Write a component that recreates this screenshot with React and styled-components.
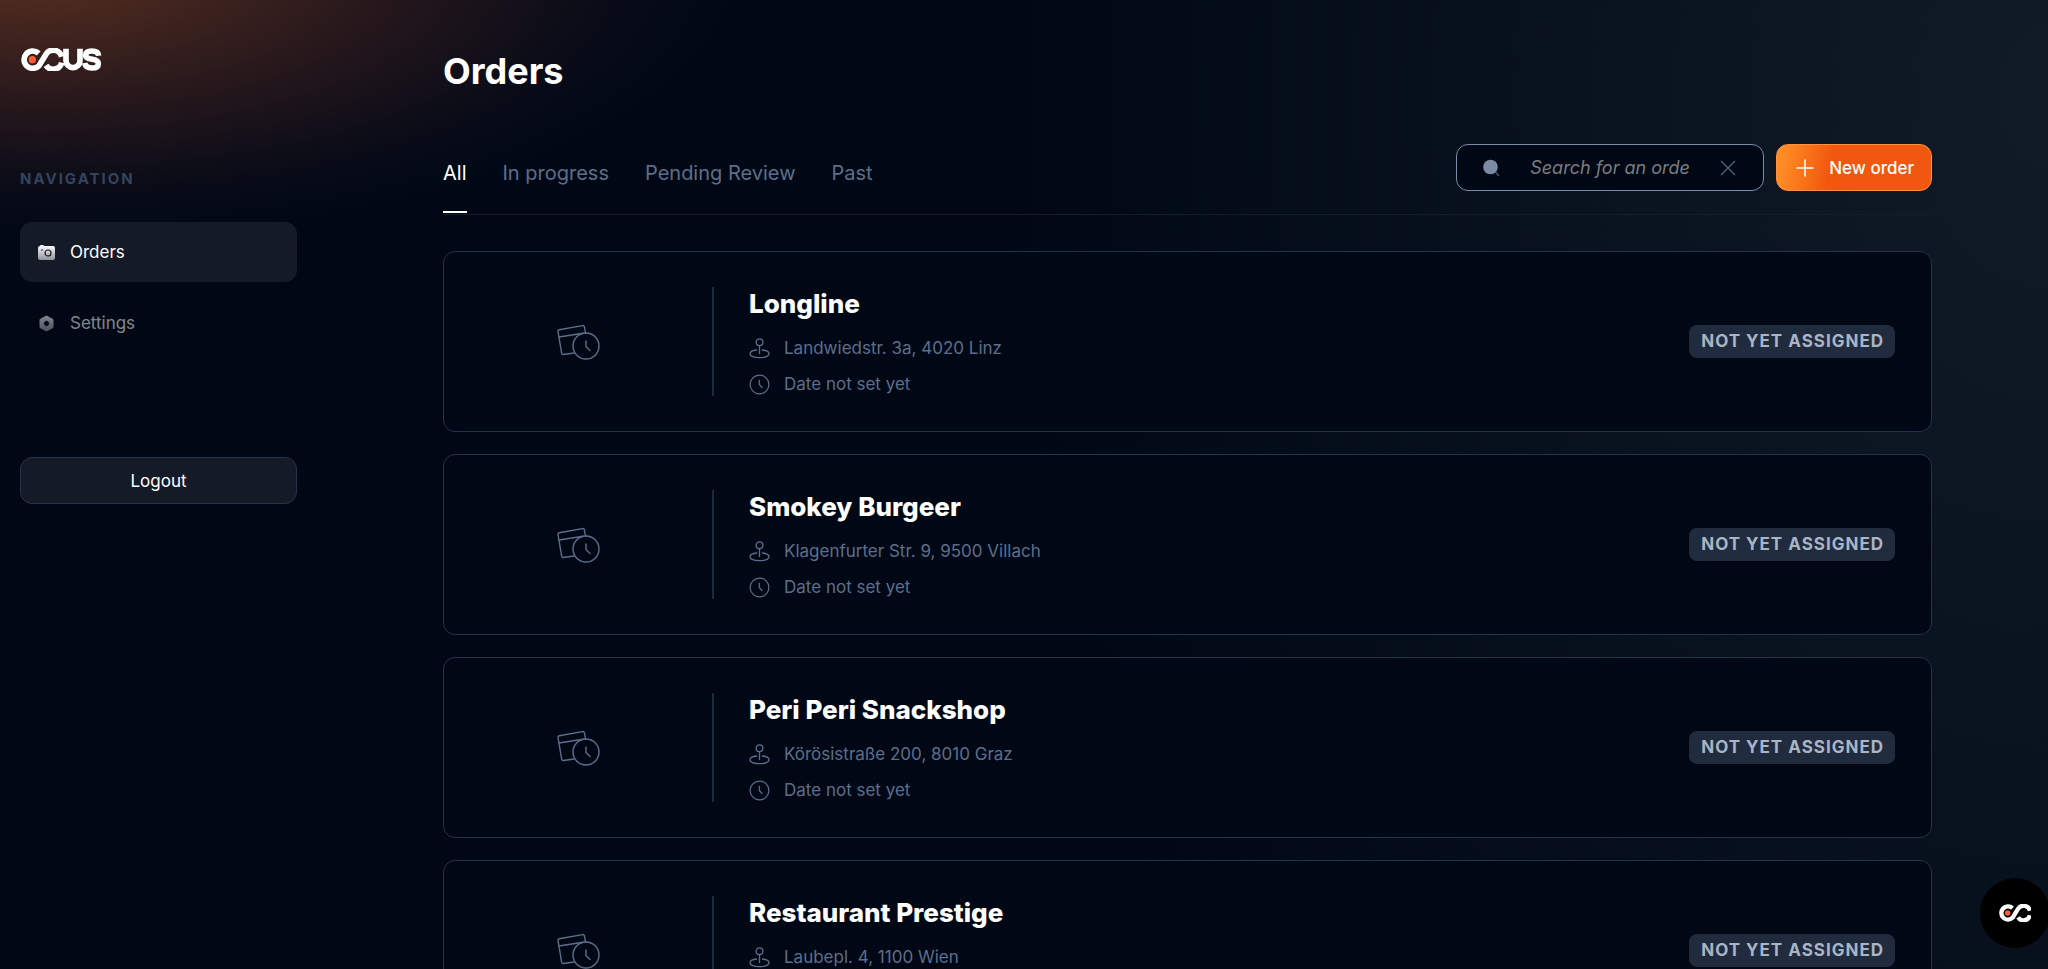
import React from 'react';
import styled, { createGlobalStyle } from 'styled-components';

const theme = {
  font: "Inter, 'Liberation Sans', sans-serif",
  colors: {
    background: '#000816',
    surface: '#141b27',
    border: '#1e293b',
    cardBorder: '#263247',
    muted: '#5e6e8a',
    heading: '#33445f',
    white: '#ffffff',
  },
  radius: '12px',
};

const GlobalStyle = createGlobalStyle`
  * {
    box-sizing: border-box;
  }

  body {
    margin: 0;
    overflow: hidden;
    background: ${theme.colors.background};
    font-family: ${theme.font};
    color: ${theme.colors.white};
  }

  button, input {
    font-family: inherit;
  }
`;

const Page = styled.div`
  display: flex;
  height: 100vh;
  overflow: hidden;
  background:
    radial-gradient(ellipse 700px 270px at 40px -30px, rgba(255, 122, 50, 0.34), rgba(255, 110, 60, 0.15) 50%, rgba(255, 110, 60, 0.04) 80%, rgba(255, 110, 60, 0) 100%),
    radial-gradient(ellipse 1050px 1500px at 100% 10%, #111a27, #000816 100%);
`;

const Sidebar = styled.aside`
  flex: 0 0 327px;
  display: flex;
  flex-direction: column;
  padding: 48px 30px 0 20px;
`;

const NavHeading = styled.h2`
  margin: 96px 0 31px;
  font-size: 15px;
  line-height: 24px;
  font-weight: 700;
  letter-spacing: 2px;
  color: ${theme.colors.heading};
`;

const Nav = styled.nav`
  display: flex;
  flex-direction: column;
  gap: 11px;
`;

const NavLink = styled.a`
  display: flex;
  align-items: center;
  gap: 14px;
  height: 60px;
  padding: 0 17px;
  border-radius: ${theme.radius};
  font-size: 17px;
  text-decoration: none;
  color: ${theme.colors.white};
  background: ${({ $active }) => ($active ? theme.colors.surface : 'transparent')};

  > * {
    opacity: ${({ $active }) => ($active ? 1 : 0.5)};
  }
`;

const LogoutButton = styled.button`
  height: 47px;
  margin-top: 104px;
  border: 1px solid ${theme.colors.cardBorder};
  border-radius: ${theme.radius};
  background: ${theme.colors.surface};
  font-size: 17px;
  color: ${theme.colors.white};
`;

const Main = styled.main`
  flex: 1;
  min-width: 0;
  padding: 48px 116px 0;
`;

const Title = styled.h1`
  margin: 0 0 50px;
  font-size: 36px;
  line-height: 46px;
  font-weight: 700;
`;

const Toolbar = styled.div`
  display: flex;
  justify-content: space-between;
  align-items: flex-start;
  height: 71px;
  margin-bottom: 36px;
  border-bottom: 1px solid #131c2a;
`;

const Tabs = styled.div`
  display: flex;
  gap: 36px;
`;

const Tab = styled.button`
  height: 69px;
  padding: 0 0 10px;
  border: 0;
  border-bottom: 2px solid ${({ $active }) => ($active ? theme.colors.white : 'transparent')};
  background: none;
  font-size: 20px;
  line-height: 24px;
  color: ${({ $active }) => ($active ? theme.colors.white : theme.colors.muted)};
`;

const Actions = styled.div`
  display: flex;
  gap: 12px;
`;

const SearchBox = styled.label`
  display: flex;
  align-items: center;
  width: 308px;
  height: 47px;
  padding: 0 27px 0 25px;
  border: 1px solid #7c8ca6;
  border-radius: ${theme.radius};
  background: ${theme.colors.background};
`;

const SearchInput = styled.input`
  flex: 1;
  min-width: 0;
  margin: 0 20px 0 30px;
  padding: 0;
  border: 0;
  outline: none;
  background: transparent;
  font-size: 18px;
  font-style: italic;
  color: ${theme.colors.white};

  &::placeholder {
    color: #7c7c7c;
    opacity: 1;
  }
`;

const ClearButton = styled.button`
  display: flex;
  padding: 0;
  border: 0;
  background: none;
`;

const NewOrderButton = styled.button`
  display: flex;
  align-items: center;
  gap: 15px;
  height: 47px;
  padding: 0 17px 0 19px;
  border: 1px solid #ff9140;
  border-radius: ${theme.radius};
  background: linear-gradient(100deg, #ff8c24 5%, #f1580f 35%);
  font-size: 17px;
  font-weight: 500;
  white-space: nowrap;
  color: ${theme.colors.white};
`;

const OrderList = styled.div`
  display: flex;
  flex-direction: column;
  gap: 22px;
`;

const Card = styled.article`
  display: flex;
  align-items: center;
  padding: 35px 36px 35px 0;
  border: 1px solid ${theme.colors.cardBorder};
  border-radius: ${theme.radius};
  background: ${theme.colors.background};
`;

const Thumbnail = styled.div`
  flex: 0 0 270px;
  display: flex;
  align-items: center;
  justify-content: center;
  align-self: stretch;
  border-right: 2px solid ${theme.colors.border};
`;

const Details = styled.div`
  flex: 1;
  padding-left: 35px;
`;

const OrderName = styled.h3`
  margin: 0 0 15px;
  font-size: 26px;
  line-height: 34px;
  font-weight: 800;
`;

const Meta = styled.div`
  display: flex;
  align-items: center;
  gap: 14px;
  height: 24px;
  font-size: 17px;
  color: ${theme.colors.muted};

  & + & {
    margin-top: 12px;
  }
`;

const Badge = styled.span`
  padding: 0 11px 0 12px;
  border-radius: 8px;
  background: #212b3e;
  font-size: 17px;
  line-height: 33px;
  font-weight: 700;
  letter-spacing: 1px;
  color: #a9b4c5;
`;

const ChatButton = styled.button`
  position: fixed;
  right: -2px;
  bottom: 21px;
  display: flex;
  align-items: center;
  justify-content: center;
  width: 70px;
  height: 70px;
  padding: 0;
  border: 0;
  border-radius: 50%;
  background: #000000;
`;

const LogoMark = () => (
  <>
    <path
      d="M53 16 A26 26 0 1 0 54 53 L76 17 A26 26 0 0 1 122 26 M75 52 A26 26 0 0 0 122 44"
      fill="none"
      stroke="#ffffff"
      strokeWidth="17"
      strokeLinejoin="round"
    />
    <circle cx="34" cy="35" r="11" fill="#ff5a36" />
  </>
);

const Logo = () => (
  <svg width="82" height="23" viewBox="-3 0 246 69" aria-label="ocus">
    <LogoMark />
    <path d="M135 2 V38 A21 21 0 0 0 177 38 V2" fill="none" stroke="#ffffff" strokeWidth="17" />
    <path
      d="M233 23 C232 12 224 9 213 9 C201 9 194 13 194 21 C194 30 203 32 214 34 C225 36 232 39 232 47 C232 56 225 60 213 60 C200 60 193 56 191 45"
      fill="none"
      stroke="#ffffff"
      strokeWidth="17"
    />
  </svg>
);

const CameraIcon = () => (
  <svg width="19" height="17" viewBox="0 0 19 17">
    <defs>
      <linearGradient id="camera" x1="0" y1="0" x2="0" y2="1">
        <stop offset="0" stopColor="#ffffff" />
        <stop offset="1" stopColor="#8d929b" />
      </linearGradient>
    </defs>
    <path d="M3 2 Q3 1 4 1 H6 Q7 1 7 2 H16 Q18 2 18 4 V14 Q18 16 16 16 H3 Q1 16 1 14 V4 Q1 2 3 2Z" fill="url(#camera)" />
    <circle cx="11" cy="9" r="3" fill="none" stroke="#141b27" strokeWidth="1.2" />
    <circle cx="5" cy="6" r="0.8" fill="#141b27" />
  </svg>
);

const SettingsIcon = () => (
  <svg width="19" height="17" viewBox="0 0 19 17">
    <defs>
      <linearGradient id="settings" x1="0" y1="0" x2="0" y2="1">
        <stop offset="0" stopColor="#ffffff" />
        <stop offset="1" stopColor="#9a9fa8" />
      </linearGradient>
    </defs>
    <path
      d="M9.5 1 L16 4.5 V12.5 L9.5 16 L3 12.5 V4.5Z M9.5 5.5 A3 3 0 1 0 9.5 11.5 A3 3 0 1 0 9.5 5.5Z"
      fill="url(#settings)"
      fillRule="evenodd"
      stroke="url(#settings)"
      strokeWidth="1"
      strokeLinejoin="round"
    />
  </svg>
);

const SearchIcon = () => (
  <svg width="18" height="18" viewBox="0 0 18 18">
    <circle cx="8.5" cy="8" r="7.3" fill="#7c8ba3" />
    <path d="M13.5 13 L17 17" stroke="#4a5a74" strokeWidth="1.2" />
  </svg>
);

const ClearIcon = () => (
  <svg width="16" height="16" viewBox="0 0 16 16">
    <path d="M1 1 L15 15 M15 1 L1 15" stroke="#56657f" strokeWidth="1.2" />
  </svg>
);

const PlusIcon = () => (
  <svg width="18" height="18" viewBox="0 0 18 18">
    <path d="M9 0.5 V17.5 M0.5 9 H17.5" stroke="#ffffff" strokeWidth="1.5" />
  </svg>
);

const PendingIcon = () => (
  <svg width="44" height="36" viewBox="0 0 44 36" fill="none" stroke="#5e6e8a" strokeWidth="1.4" strokeLinecap="round" strokeLinejoin="round">
    <path d="M18 29 L7.5 30.5 Q6 30.7 5.7 29.3 L2 7.5 Q1.8 6 3.2 5.7 L26.5 1.6 Q28 1.4 28.4 2.8 L29.5 9" />
    <path d="M3 13 L27 9.3" />
    <circle cx="30" cy="22" r="13" />
    <path d="M30 17 V22.5 L34 26.5" />
  </svg>
);

const PinIcon = () => (
  <svg width="21" height="21" viewBox="0 0 21 21" fill="none" stroke="#5e6e8a" strokeWidth="1.3" strokeLinecap="round">
    <circle cx="10.5" cy="4.3" r="3.4" />
    <path d="M10.5 7.7 V15.5" />
    <path d="M7.6 12 C3.5 12.5 1 13.8 1 15.6 C1 18 5 19.7 10.5 19.7 C16 19.7 20 18 20 15.6 C20 13.8 17.5 12.5 13.4 12" />
  </svg>
);

const ClockIcon = () => (
  <svg width="21" height="21" viewBox="0 0 21 21" fill="none" stroke="#5e6e8a" strokeWidth="1.2" strokeLinecap="round">
    <circle cx="10.5" cy="10.5" r="9.4" />
    <path d="M10.3 6 V10.5 L13 13.5" />
  </svg>
);

const tabs = ['All', 'In progress', 'Pending Review', 'Past'];

const orders = [
  { name: 'Longline', address: 'Landwiedstr. 3a, 4020 Linz' },
  { name: 'Smokey Burgeer', address: 'Klagenfurter Str. 9, 9500 Villach' },
  { name: 'Peri Peri Snackshop', address: 'Körösistraße 200, 8010 Graz' },
  { name: 'Restaurant Prestige', address: 'Laubepl. 4, 1100 Wien' },
];

const OrderCard = ({ name, address }) => (
  <Card>
    <Thumbnail>
      <PendingIcon />
    </Thumbnail>
    <Details>
      <OrderName>{name}</OrderName>
      <Meta>
        <PinIcon />
        <span>{address}</span>
      </Meta>
      <Meta>
        <ClockIcon />
        <span>Date not set yet</span>
      </Meta>
    </Details>
    <Badge>NOT YET ASSIGNED</Badge>
  </Card>
);

const App = () => {
  return (
    <>
      <GlobalStyle />
      <Page>
        <Sidebar>
          <Logo />
          <NavHeading>NAVIGATION</NavHeading>
          <Nav>
            <NavLink href="#orders" $active>
              <CameraIcon />
              <span>Orders</span>
            </NavLink>
            <NavLink href="#settings">
              <SettingsIcon />
              <span>Settings</span>
            </NavLink>
          </Nav>
          <LogoutButton type="button">Logout</LogoutButton>
        </Sidebar>
        <Main>
          <Title>Orders</Title>
          <Toolbar>
            <Tabs role="tablist">
              {tabs.map((tab, index) => (
                <Tab key={tab} type="button" role="tab" aria-selected={index === 0} $active={index === 0}>
                  {tab}
                </Tab>
              ))}
            </Tabs>
            <Actions>
              <SearchBox>
                <SearchIcon />
                <SearchInput type="text" aria-label="Search" placeholder="Search for an orde" />
                <ClearButton type="button" aria-label="Clear search">
                  <ClearIcon />
                </ClearButton>
              </SearchBox>
              <NewOrderButton type="button">
                <PlusIcon />
                New order
              </NewOrderButton>
            </Actions>
          </Toolbar>
          <OrderList>
            {orders.map((order) => (
              <OrderCard key={order.name} {...order} />
            ))}
          </OrderList>
        </Main>
        <ChatButton type="button" aria-label="Open chat">
          <svg width="32" height="18" viewBox="0 0 126 70">
            <LogoMark />
          </svg>
        </ChatButton>
      </Page>
    </>
  );
};

export default App;
